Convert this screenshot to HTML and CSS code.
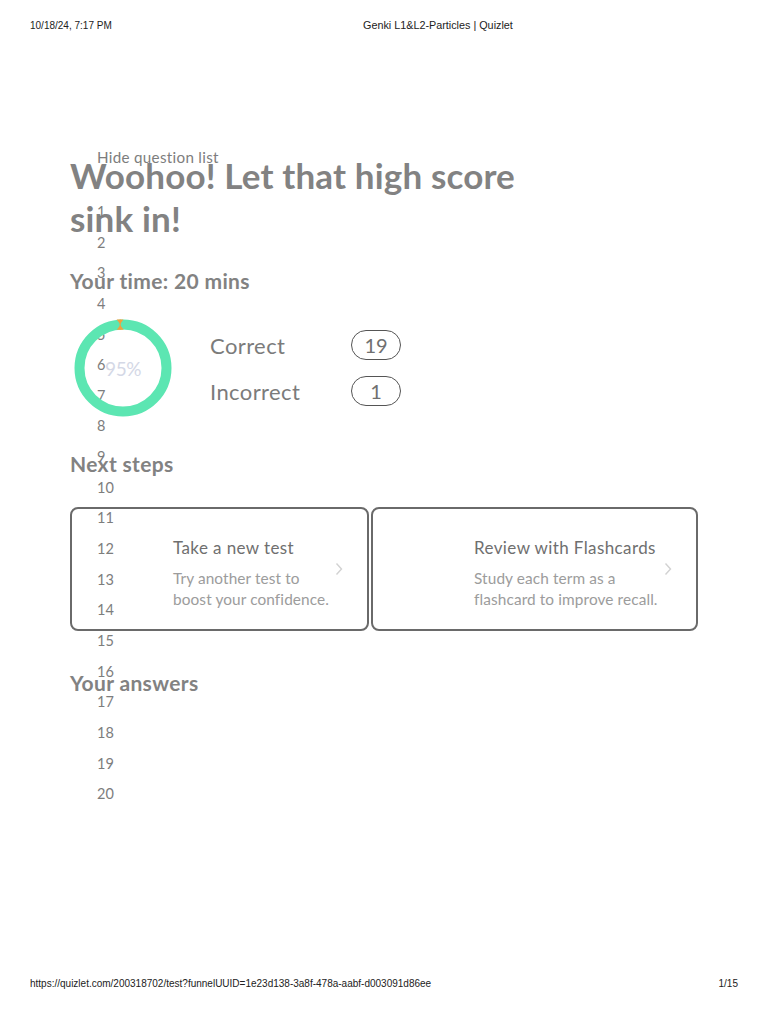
FILE: index.html
```html
<!DOCTYPE html>
<html lang="en">
<head>
<meta charset="utf-8">
<title>Genki L1&amp;L2-Particles | Quizlet</title>
<link rel="stylesheet" href="styles.css">
</head>
<body>
<div class="page">
  <header class="print-head">
    <span class="date">10/18/24, 7:17 PM</span>
    <span class="doc-title">Genki L1&amp;L2-Particles | Quizlet</span>
  </header>

  <main class="main">
    <nav class="qlist">
      <div class="qlist-toggle">Hide question list</div>
      <ol class="qnums">
        <li>1</li><li>2</li><li>3</li><li>4</li><li>5</li>
        <li>6</li><li>7</li><li>8</li><li>9</li><li>10</li>
        <li>11</li><li>12</li><li>13</li><li>14</li><li>15</li>
        <li>16</li><li>17</li><li>18</li><li>19</li><li>20</li>
      </ol>
    </nav>

    <h1 class="headline">Woohoo! Let that high score<br>sink in!</h1>

    <h2 class="section-title time-title">Your time: 20 mins</h2>

    <section class="results">
      <div class="donut">
        <svg width="100" height="100" viewBox="0 0 100 100">
          <circle cx="50" cy="50" r="43.5" fill="none" stroke="#5ce6b2" stroke-width="10"/>
          <path d="M43.6 1.4 L50.4 1.4 L47.2 6 Z" fill="#f2a03d"/>
          <path d="M47.2 7.2 L50.8 11.8 L43.8 11.8 Z" fill="#f2a03d"/>
          <rect x="46.7" y="1.5" width="1" height="10" fill="#f2a03d"/>
        </svg>
        <span class="donut-label">95%</span>
      </div>
      <div class="stats">
        <div class="stat-row">
          <span class="stat-label">Correct</span>
          <span class="pill">19</span>
        </div>
        <div class="stat-row">
          <span class="stat-label">Incorrect</span>
          <span class="pill">1</span>
        </div>
      </div>
    </section>

    <h2 class="section-title next-title">Next steps</h2>

    <section class="cards">
      <a class="card">
        <div class="card-text">
          <div class="card-title">Take a new test</div>
          <div class="card-desc">Try another test to<br>boost your confidence.</div>
        </div>
        <svg class="chev" width="8" height="14" viewBox="0 0 8 14"><path d="M1.5 1.5 L6.5 7 L1.5 12.5" fill="none" stroke="#d2d2d2" stroke-width="1.4"/></svg>
      </a>
      <a class="card">
        <div class="card-text">
          <div class="card-title">Review with Flashcards</div>
          <div class="card-desc">Study each term as a<br>flashcard to improve recall.</div>
        </div>
        <svg class="chev" width="8" height="14" viewBox="0 0 8 14"><path d="M1.5 1.5 L6.5 7 L1.5 12.5" fill="none" stroke="#d2d2d2" stroke-width="1.4"/></svg>
      </a>
    </section>

    <h2 class="section-title answers-title">Your answers</h2>
  </main>

  <footer class="print-foot">
    <span class="url">https://quizlet.com/200318702/test?funnelUUID=1e23d138-3a8f-478a-aabf-d003091d86ee</span>
    <span class="pageno">1/15</span>
  </footer>
</div>
</body>
</html>
```

FILE: styles.css
```css
* { box-sizing: border-box; }
html, body { margin: 0; padding: 0; background: #fff; }
.page {
  width: 768px;
  height: 1024px;
  position: relative;
  display: flex;
  flex-direction: column;
}
.print-head {
  display: flex;
  align-items: center;
  height: 50px;
  padding: 0 30px;
  font-family: "Liberation Sans", Arial, sans-serif;
  font-size: 10px;
  color: #222;
}
.print-head .date { width: 333px; }
.print-head .doc-title { font-size: 10.8px; }
.print-foot {
  margin-top: auto;
  display: flex;
  justify-content: space-between;
  align-items: center;
  height: 52px;
  padding: 0 30px 30px 30px;
  font-family: "Liberation Sans", Arial, sans-serif;
  font-size: 10px;
  color: #222;
}
.main {
  position: relative;
  padding: 104px 0 0 70px;
  font-family: Lato, "Open Sans", sans-serif;
  color: #808080;
}
.qlist {
  position: absolute;
  left: 97px;
  top: 98px;
  font-family: Lato, sans-serif;
  color: #7d7d7d;
  font-size: 14px;
}
.qlist-toggle {
  line-height: 18px;
  height: 18px;
  font-size: 15.2px;
  letter-spacing: 0.3px;
}
.qnums {
  list-style: none;
  margin: 37px 0 0 0;
  padding: 0;
}
.qnums li {
  height: 30.65px;
  line-height: 18px;
  font-size: 14.5px;
}
.headline {
  margin: 0;
  font-size: 35px;
  line-height: 43px;
  font-weight: 700;
  color: #828282;
  letter-spacing: 0.15px;
}
.section-title {
  margin: 0;
  font-size: 21px;
  line-height: 28px;
  font-weight: 700;
  color: #828282;
  letter-spacing: 0.35px;
}
.time-title { margin-top: 27px; }
.results {
  display: flex;
  align-items: center;
  margin-top: 23px;
}
.donut {
  position: relative;
  width: 100px;
  height: 100px;
  margin-left: 3px;
}
.donut svg { display: block; }
.donut-label {
  position: absolute;
  left: 0; top: 0; right: 0; bottom: 0;
  display: flex;
  align-items: center;
  justify-content: center;
  font-size: 19px;
  color: #d4d8e6;
  letter-spacing: -0.5px;
}
.stats {
  margin-left: 37px;
  display: flex;
  flex-direction: column;
  gap: 16px;
}
.stat-row {
  display: flex;
  align-items: center;
  height: 30px;
}
.stat-label {
  width: 141px;
  font-size: 22px;
  color: #7b7b7b;
  letter-spacing: 0.4px;
}
.pill {
  width: 50px;
  height: 30px;
  border: 1px solid #555;
  border-radius: 15px;
  display: flex;
  align-items: center;
  justify-content: center;
  font-size: 20px;
  color: #707070;
}
.next-title { margin-top: 32px; }
.cards {
  display: grid;
  grid-template-columns: 299px 327px;
  gap: 2px;
  margin-top: 29px;
}
.card {
  height: 124px;
  border: 2px solid #6a6a6a;
  border-radius: 8px;
  display: flex;
  align-items: center;
  padding: 8px 24px 0 101px;
}
.card-text { flex: 1; }
.card-title {
  font-size: 17px;
  line-height: 22px;
  color: #6f6f6f;
  font-weight: 400;
  letter-spacing: 0.4px;
}
.card-desc {
  margin-top: 9px;
  font-size: 15.4px;
  line-height: 21px;
  color: #9c9c9c;
  font-weight: 400;
  letter-spacing: 0.1px;
}
.chev { flex: none; margin-top: -8px; }
.answers-title { margin-top: 38px; }
```
